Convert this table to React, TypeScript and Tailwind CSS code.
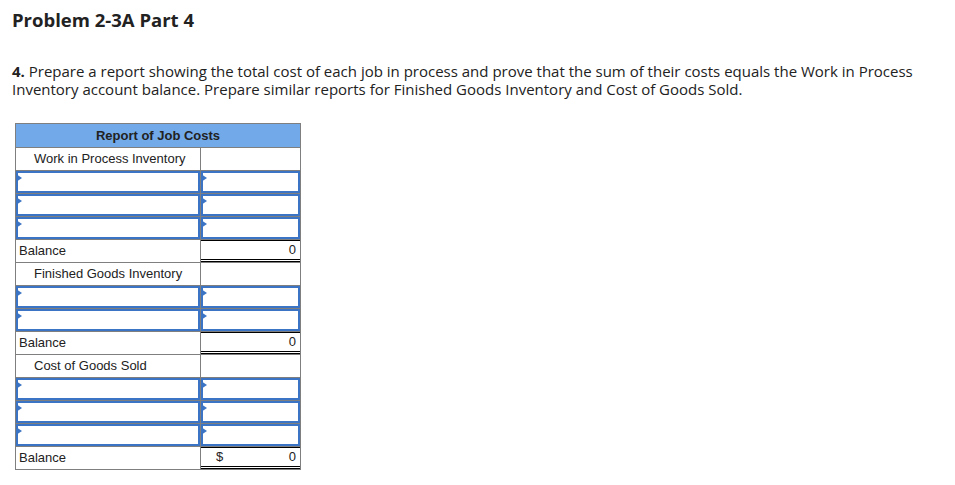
const sans = { fontFamily: '"Liberation Sans", Arial, sans-serif' };

function InputCell({ wide }: { wide?: boolean }) {
  return (
    <div className={`${wide ? 'w-[185px] border-r border-[#7f7f7f]' : 'flex-1'} h-full`}>
      <div className="relative h-full border-2 border-[#3b74c4] bg-white">
        <span className="absolute left-[-2px] top-[1px] h-0 w-0 border-y-[4px] border-l-[6px] border-y-transparent border-l-[#3b74c4]" />
      </div>
    </div>
  );
}

function InputRow() {
  return (
    <div className="flex h-[23px] border-t border-[#7f7f7f]">
      <InputCell wide />
      <InputCell />
    </div>
  );
}

function LabelRow({ label }: { label: string }) {
  return (
    <div className="flex h-[23px] border-t border-[#7f7f7f]">
      <div className="flex w-[185px] items-center border-r border-[#7f7f7f] pl-[18px] text-[13px] text-[#222]">
        {label}
      </div>
      <div className="flex-1" />
    </div>
  );
}

function BalanceRow({ dollar }: { dollar?: boolean }) {
  return (
    <div className="flex h-[23px] border-t border-[#7f7f7f]">
      <div className="flex w-[185px] items-center border-r border-[#7f7f7f] pl-[3px] text-[13px] text-[#222]">
        Balance
      </div>
      <div className="flex flex-1 items-center justify-between border-t border-b-[3px] border-double border-t-black border-b-black px-[4px] text-[13px] text-[#222]">
        <span className="pl-[11px]">{dollar ? '$' : ''}</span>
        <span>0</span>
      </div>
    </div>
  );
}

export default function App() {
  return (
    <div className="min-h-[485px] w-[955px] bg-white text-[#222]">
      <div className="px-[12px] pt-[8px]" style={{ fontFamily: '"Open Sans", Lato, sans-serif' }}>
        <h1 className="text-[18.5px] font-bold leading-[24px]">Problem 2-3A Part 4</h1>
        <p className="mt-[30px] text-[15px] leading-[18px]">
          <strong>4.</strong> Prepare a report showing the total cost of each job in process and prove that the sum of
          their costs equals the Work in Process Inventory account balance. Prepare similar reports for Finished Goods
          Inventory and Cost of Goods Sold.
        </p>
      </div>

      <div className="ml-[15px] mt-[25px] w-[286px] border border-[#7f7f7f]" style={sans}>
        <div className="flex h-[23px] items-center justify-center bg-[#72a9e9] text-[13px] font-bold text-[#222]">
          Report of Job Costs
        </div>
        <LabelRow label="Work in Process Inventory" />
        <InputRow />
        <InputRow />
        <InputRow />
        <BalanceRow />
        <LabelRow label="Finished Goods Inventory" />
        <InputRow />
        <InputRow />
        <BalanceRow />
        <LabelRow label="Cost of Goods Sold" />
        <InputRow />
        <InputRow />
        <InputRow />
        <BalanceRow dollar />
      </div>
    </div>
  );
}
